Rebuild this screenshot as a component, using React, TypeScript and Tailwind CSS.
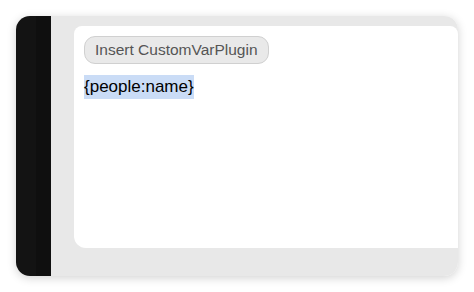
export default function App() {
  return (
    <div className="w-[474px] h-[292px] bg-white pt-4 pl-4" style={{ fontFamily: "'Liberation Sans', Arial, sans-serif" }}>
      <div className="w-[442px] h-[260px] flex rounded-[14px] overflow-hidden shadow-[0_2px_10px_rgba(0,0,0,0.18)]">
        <div className="w-[35px] flex shrink-0">
          <div className="w-[20px] bg-[#131313]" />
          <div className="flex-1 bg-[#0f0f0f]" />
        </div>
        <div className="flex-1 bg-[#e8e8e8] pt-[10px] pl-[23px] pb-[28px]">
          <div className="h-full bg-white rounded-tl-[8px] rounded-bl-[12px] rounded-tr-[8px] pt-[10px] pl-[10px]">
            <button className="h-[28px] px-[10px] rounded-[11px] border border-[#d0d0d0] bg-[#e9e9e9] text-[15.5px] text-[#555] leading-none">
              Insert CustomVarPlugin
            </button>
            <div className="mt-[11px] text-[17px] leading-[24px] text-black">
              <span className="inline-block h-[24px] bg-[#cadcf6]">{'{people:name}'}</span>
            </div>
          </div>
        </div>
      </div>
    </div>
  )
}
